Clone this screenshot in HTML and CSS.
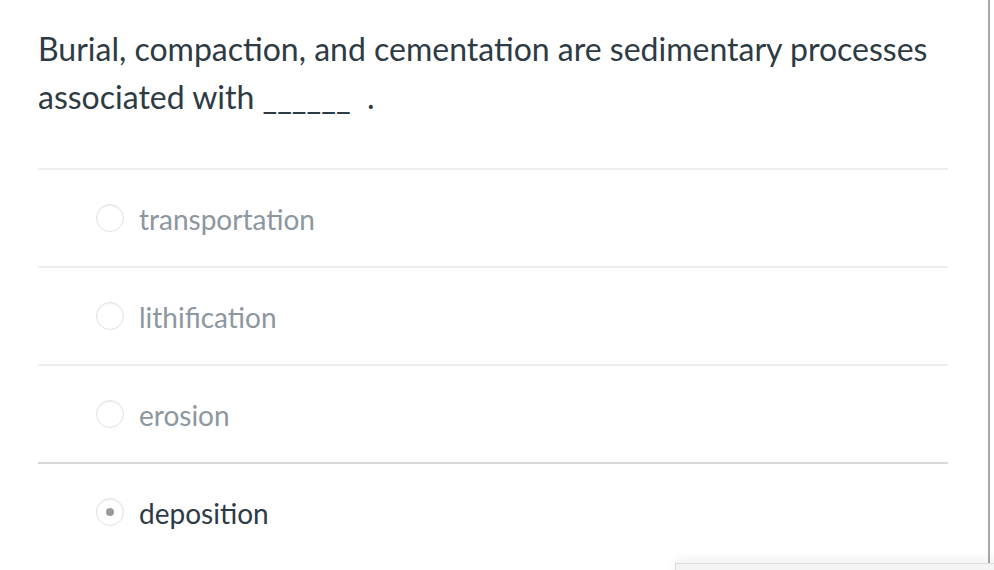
FILE: index.html
```html
<!DOCTYPE html>
<html>
<head>
<meta charset="utf-8">
<link rel="stylesheet" href="styles.css">
</head>
<body>
<div class="page">
  <div class="quiz">
    <div class="question">Burial, compaction, and cementation are sedimentary processes associated with ______ &nbsp;.</div>
    <div class="answers">
      <div class="answer"><span class="radio"></span><span class="label">transportation</span></div>
      <div class="answer"><span class="radio"></span><span class="label">lithification</span></div>
      <div class="answer"><span class="radio"></span><span class="label">erosion</span></div>
      <div class="answer selected"><span class="radio"></span><span class="label">deposition</span></div>
    </div>
  </div>
  <div class="rail"></div>
  <div class="popup"></div>
</div>
</body>
</html>
```
FILE: styles.css
```css
html, body {
  margin: 0;
  padding: 0;
  background: #fff;
}
.page {
  position: relative;
  width: 994px;
  height: 570px;
  overflow: hidden;
  display: flex;
}
.quiz {
  width: 910px;
  margin-left: 38px;
  padding-top: 25px;
  font-family: Lato, "Open Sans", sans-serif;
}
.question {
  font-size: 32px;
  line-height: 48px;
  color: #2d3b45;
  padding-bottom: 47px;
}
.answers {
  border-top: 2px solid #eeeeee;
}
.answer {
  display: flex;
  align-items: center;
  height: 96px;
  border-bottom: 2px solid #eeeeee;
  padding-left: 58px;
}
.answer:nth-child(3) {
  border-bottom-color: #d8d8d8;
}
.answer:last-child {
  border-bottom: none;
}
.radio {
  width: 26px;
  height: 26px;
  border: 1px solid #e2e2e2;
  border-radius: 50%;
  box-shadow: inset 0 1px 2px rgba(0,0,0,0.06);
  background: #fff;
  display: flex;
  align-items: center;
  justify-content: center;
  flex: none;
}
.selected .radio::after {
  content: "";
  width: 8px;
  height: 8px;
  border-radius: 50%;
  background: #9a9a9a;
}
.label {
  margin-left: 15px;
  font-size: 28px;
  line-height: 34px;
  padding-top: 2px;
  color: #8d979f;
}
.selected .label {
  color: #2d3b45;
}
.rail {
  position: absolute;
  left: 988px;
  top: 0;
  width: 2px;
  height: 570px;
  background: #a9a9a9;
}
.popup {
  position: absolute;
  left: 675px;
  top: 563px;
  width: 330px;
  height: 20px;
  background: #f4f4f4;
  border: 1px solid #dcdcdc;
  box-shadow: 0 -4px 12px rgba(0,0,0,0.06);
}
```
